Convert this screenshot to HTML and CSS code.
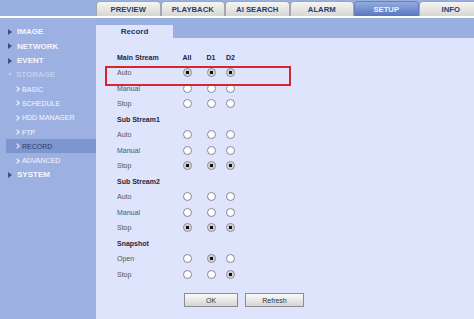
FILE: index.html
```html
<!DOCTYPE html>
<html>
<head>
<meta charset="utf-8">
<link rel="stylesheet" href="styles.css">
</head>
<body>
<div class="app">
  <header class="top">
    <nav class="tabs">
      <div class="tab">PREVIEW</div>
      <div class="tab">PLAYBACK</div>
      <div class="tab">AI SEARCH</div>
      <div class="tab">ALARM</div>
      <div class="tab active">SETUP</div>
      <div class="tab">INFO</div>
    </nav>
  </header>
  <div class="sep"></div>
  <div class="body">
    <aside class="side">
      <div class="nav-item"><span class="tri"></span>IMAGE</div>
      <div class="nav-item"><span class="tri"></span>NETWORK</div>
      <div class="nav-item"><span class="tri"></span>EVENT</div>
      <div class="nav-item open"><span class="tri down"></span>STORAGE</div>
      <div class="nav-item sub"><svg class="chev" viewBox="0 0 4 6"><polyline points="0.6,0.6 3.2,3 0.6,5.4"/></svg>BASIC</div>
      <div class="nav-item sub"><svg class="chev" viewBox="0 0 4 6"><polyline points="0.6,0.6 3.2,3 0.6,5.4"/></svg>SCHEDULE</div>
      <div class="nav-item sub"><svg class="chev" viewBox="0 0 4 6"><polyline points="0.6,0.6 3.2,3 0.6,5.4"/></svg>HDD MANAGER</div>
      <div class="nav-item sub"><svg class="chev" viewBox="0 0 4 6"><polyline points="0.6,0.6 3.2,3 0.6,5.4"/></svg>FTP</div>
      <div class="nav-item sub sel"><svg class="chev" viewBox="0 0 4 6"><polyline points="0.6,0.6 3.2,3 0.6,5.4"/></svg>RECORD</div>
      <div class="nav-item sub"><svg class="chev" viewBox="0 0 4 6"><polyline points="0.6,0.6 3.2,3 0.6,5.4"/></svg>ADVANCED</div>
      <div class="nav-item"><span class="tri"></span>SYSTEM</div>
    </aside>
    <main class="main">
      <div class="subbar"><div class="subtab">Record</div></div>
      <div class="panel">
        <div class="row head"><span>Main Stream</span><span class="ch">All</span><span class="ch">D1</span><span class="ch">D2</span></div>
        <div class="row hl"><span>Auto</span><i class="r on"></i><i class="r on"></i><i class="r on"></i></div>
        <div class="row"><span>Manual</span><i class="r"></i><i class="r"></i><i class="r"></i></div>
        <div class="row"><span>Stop</span><i class="r"></i><i class="r"></i><i class="r"></i></div>
        <div class="row head"><span>Sub Stream1</span></div>
        <div class="row"><span>Auto</span><i class="r"></i><i class="r"></i><i class="r"></i></div>
        <div class="row"><span>Manual</span><i class="r"></i><i class="r"></i><i class="r"></i></div>
        <div class="row"><span>Stop</span><i class="r on"></i><i class="r on"></i><i class="r on"></i></div>
        <div class="row head"><span>Sub Stream2</span></div>
        <div class="row"><span>Auto</span><i class="r"></i><i class="r"></i><i class="r"></i></div>
        <div class="row"><span>Manual</span><i class="r"></i><i class="r"></i><i class="r"></i></div>
        <div class="row"><span>Stop</span><i class="r on"></i><i class="r on"></i><i class="r on"></i></div>
        <div class="row head"><span>Snapshot</span></div>
        <div class="row"><span>Open</span><i class="r"></i><i class="r on"></i><i class="r"></i></div>
        <div class="row"><span>Stop</span><i class="r"></i><i class="r"></i><i class="r on"></i></div>
        <div class="btns">
          <div class="btn ok">OK</div>
          <div class="btn refresh">Refresh</div>
        </div>
      </div>
    </main>
  </div>
</div>
</body>
</html>
```

FILE: styles.css
```css
* { box-sizing: border-box; }
html, body { margin: 0; padding: 0; }
body {
  width: 474px;
  height: 319px;
  overflow: hidden;
  background: #dde4fb;
  font-family: "Liberation Sans", Arial, sans-serif;
}
.app { display: flex; flex-direction: column; height: 319px; }

.top {
  height: 16px;
  background: #98afe0;
  display: flex;
  align-items: flex-end;
  padding-left: 96px;
}
.tabs { display: flex; }
.tab {
  flex: none;
  width: 64.5px;
  height: 15px;
  display: flex;
  align-items: center;
  justify-content: center;
  font-size: 7.7px;
  font-weight: bold;
  color: #2a3a6e;
  background: linear-gradient(#f5f5f2, #d6d6d2);
  border: 1px solid #a3a6b0;
  border-bottom: none;
  border-radius: 4px 4px 0 0;
}
.tab.active {
  background: linear-gradient(#93acdf, #5876c0);
  color: #eef2ff;
  border-color: #6a80bd;
}
.sep { height: 2px; background: #ffffff; }

.body { flex: 1; display: flex; }
.side {
  width: 96px;
  flex: none;
  background: #9cb1e2;
  padding-top: 6.8px;
}
.nav-item {
  height: 14.3px;
  display: flex;
  align-items: center;
  padding-left: 8px;
  font-size: 8px;
  font-weight: bold;
  color: #f4f6ff;
  white-space: nowrap;
}
.tri {
  width: 0;
  height: 0;
  border-top: 3px solid transparent;
  border-bottom: 3px solid transparent;
  border-left: 4px solid #3c4f88;
  margin-right: 5px;
}
.tri.down {
  border-left: 2.5px solid transparent;
  border-right: 2.5px solid transparent;
  border-top: 4px solid #b9c4e6;
  border-bottom: none;
  margin-right: 4px;
}
.nav-item.open { color: #c5cfec; }
.nav-item.sub {
  padding-left: 16px;
  font-size: 7px;
  font-weight: normal;
}
.chev {
  width: 4px;
  height: 6px;
  margin-right: 2px;
  fill: none;
  stroke: #f4f6ff;
  stroke-width: 1.1;
}
.nav-item.sel {
  margin-left: 6px;
  padding-left: 10px;
  background: #7e96d0;
  color: #2b3a68;
}
.nav-item.sel .chev { stroke: #e8eeff; }

.main { flex: 1; display: flex; flex-direction: column; }
.subbar {
  height: 20px;
  background: #98afe0;
  display: flex;
  align-items: flex-end;
}
.subtab {
  width: 77px;
  height: 13px;
  background: #dde4fb;
  display: flex;
  align-items: center;
  justify-content: center;
  font-size: 8px;
  font-weight: bold;
  color: #253463;
}
.panel {
  flex: 1;
  background: #dde4fb;
  padding: 11.5px 0 0 21px;
}
.row {
  display: grid;
  grid-template-columns: 65.5px 24px 19.5px 9px;
  height: 15.5px;
  align-items: center;
  font-size: 7px;
  color: #4f5669;
}
.row.head { font-weight: bold; color: #1e2742; }
.ch { width: 9px; display: flex; justify-content: center; white-space: nowrap; }
.row.hl { position: relative; }
.row.hl::after {
  content: "";
  position: absolute;
  left: -12px;
  top: 0.8px;
  width: 182px;
  height: 16.5px;
  border: 2px solid #d7262e;
}
.r {
  display: block;
  width: 9px;
  height: 9px;
  border-radius: 50%;
  border: 1px solid #85878c;
  background: #ffffff;
}
.r.on {
  background: radial-gradient(circle, #111 0 1.5px, #c9c9c9 2px, #e4e4e4 3.4px, #f4f4f4 4px);
}
.btns {
  display: flex;
  gap: 7px;
  margin-top: 11px;
  padding-left: 67px;
}
.btn {
  height: 14px;
  display: flex;
  align-items: center;
  justify-content: center;
  border: 1px solid #8d8d8d;
  background: linear-gradient(#fbfbfb, #d4d4d4);
  font-size: 7px;
  color: #333;
}
.btn.ok { width: 54px; }
.btn.refresh { width: 59px; }
```
